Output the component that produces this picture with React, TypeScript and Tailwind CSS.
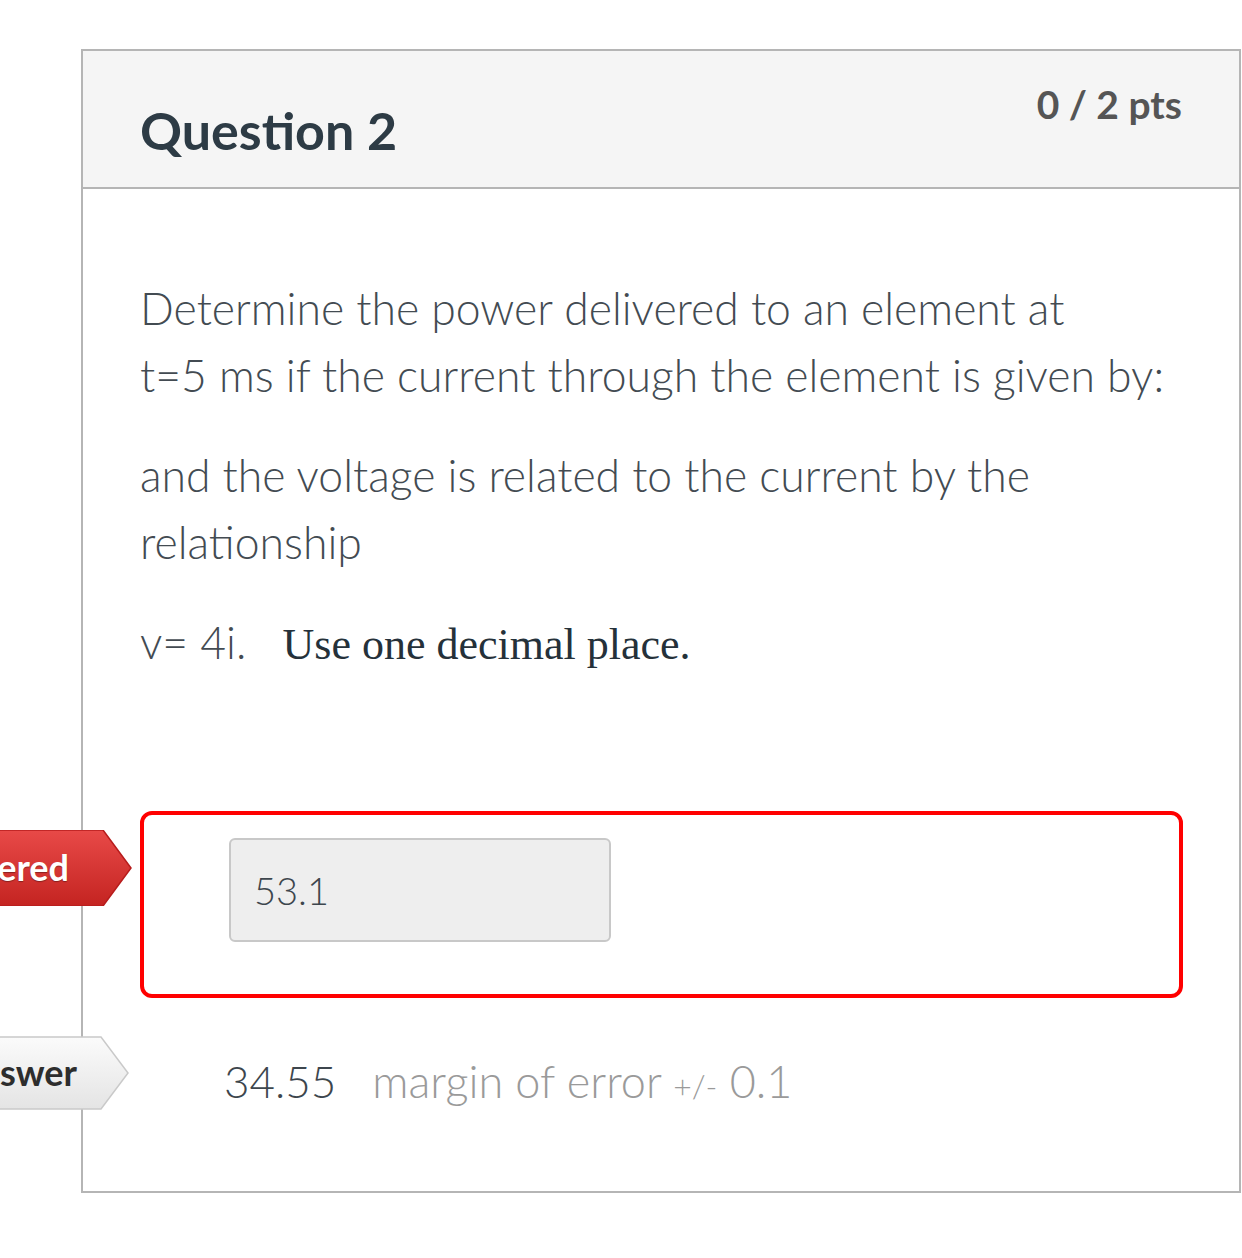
import React from 'react';

function Badge({ label, tone, top }: { label: string; tone: 'red' | 'gray'; top: number }) {
  const red = tone === 'red';
  return (
    <div className="absolute left-0 h-[76px] w-[132px]" style={{ top }}>
      <svg width="132" height="76" viewBox="0 0 132 76" className="absolute left-0 top-0">
        <defs>
          <linearGradient id={`g-${tone}`} x1="0" y1="0" x2="0" y2="1">
            <stop offset="0" stopColor={red ? '#e84a48' : '#fbfbfb'} />
            <stop offset="1" stopColor={red ? '#c42421' : '#e4e4e4'} />
          </linearGradient>
        </defs>
        <polygon
          points={red ? '-2,0 103,0 131,38 103,76 -2,76' : '-2,1 101,1 128,37 101,73 -2,73'}
          fill={`url(#g-${tone})`}
          stroke={red ? '#b71c1c' : '#c9c9c9'}
          strokeWidth="1.5"
        />
      </svg>
      <span
        className={`absolute whitespace-nowrap font-['Lato',sans-serif] text-[36px] font-bold leading-none ${
          red
            ? 'right-[63px] top-[19px] text-white [text-shadow:0_1px_1px_rgba(0,0,0,0.35)]'
            : 'right-[55px] top-[18px] text-[#2d2d2d]'
        }`}
      >
        {label}
      </span>
    </div>
  );
}

export default function App() {
  return (
    <div className="relative h-[1258px] w-[1242px] overflow-hidden bg-white font-['Lato',sans-serif]">
      <div className="ml-[81px] mt-[49px] w-[1160px] border-2 border-[#b5b5b5]">
        {/* Header */}
        <div className="flex h-[138px] items-start justify-between border-b-2 border-[#b5b5b5] bg-[#f5f5f5] px-[57px]">
          <h2 className="mt-[53px] text-[52px] font-bold leading-none text-[#2d3b45]">Question 2</h2>
          <span className="mt-[34px] text-[39px] font-bold leading-none text-[#555]">0 / 2 pts</span>
        </div>

        {/* Body */}
        <div className="px-[57px] pt-[85px] text-[44.5px] font-light leading-[67px] text-[#434b52]">
          <p>
            Determine the power delivered to an element at
            <br />
            t=5 ms if the current through the element is given by:
          </p>
          <p className="mt-[33px]">and the voltage is related to the current by the relationship</p>
          <p className="mt-[33px]">
            v= 4i.{'\u00a0\u00a0 '}
            <span className="font-['Liberation_Serif',serif] text-[44px] font-normal text-[#25313a]">Use one decimal place.</span>
          </p>
        </div>

        <div className="ml-[57px] mt-[133px] h-[187px] w-[1043px] rounded-[12px] border-[4px] border-[#ff0000] pl-[85px] pt-[23px]">
          <div className="flex h-[104px] w-[382px] items-center rounded-[6px] border-2 border-[#c8c8c8] bg-[#eeeeee] pl-[23px] text-[38px] font-light text-[#3d464d]">
            53.1
          </div>
        </div>

        <div className="flex items-baseline pb-[87px] pl-[141px] pt-[61px] leading-none">
          <span className="text-[44px] font-light text-[#3d464d]">34.55</span>
          <span className="ml-[36px] text-[45px] font-light text-[#9a9a9a]">
            margin of error <span className="text-[32px]">+/-</span> 0.1
          </span>
        </div>
      </div>

      <Badge label="You Answered" tone="red" top={830} />
      <Badge label="Correct Answer" tone="gray" top={1036} />
    </div>
  );
}
